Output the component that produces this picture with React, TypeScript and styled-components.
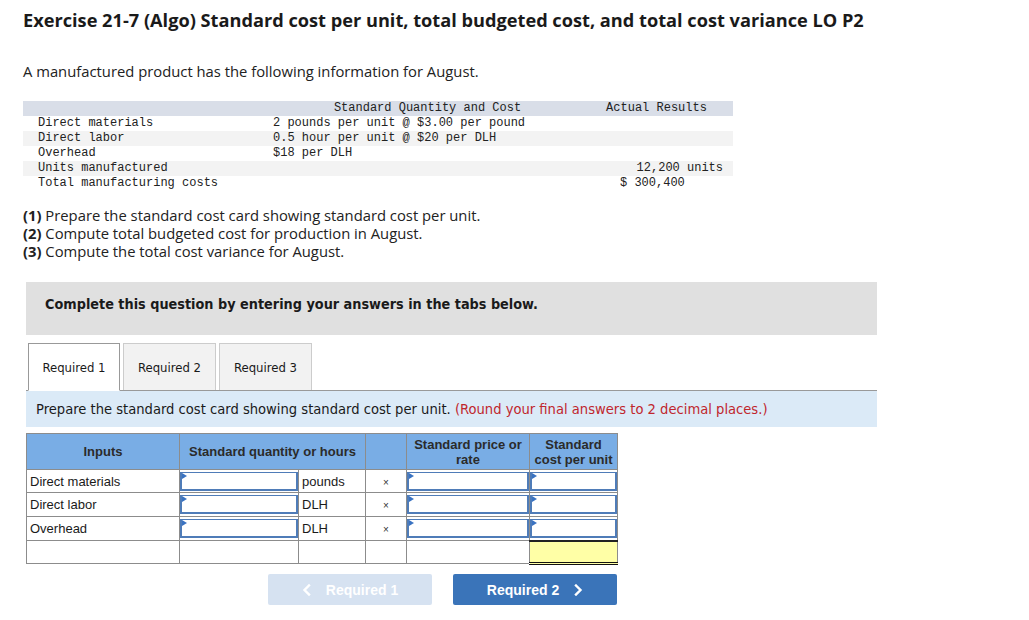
import React from "react";
import styled, { createGlobalStyle } from "styled-components";

const GlobalStyle = createGlobalStyle`
  html, body { margin: 0; padding: 0; background: #fff; }
  body { font-family: "Liberation Sans", Arial, sans-serif; color: #333; }
`;

const Page = styled.div`
  width: 1029px;
  padding-bottom: 10px;
`;

const Title = styled.h1`
  margin: 9px 0 0 23px;
  font-family: "Open Sans", Lato, sans-serif;
  font-weight: 700;
  font-size: 18.2px;
  line-height: 22px;
  color: #1a1a1a;
  white-space: nowrap;
`;

const Lead = styled.p`
  margin: 30px 0 0 23px;
  font-family: "Open Sans", Lato, sans-serif;
  font-size: 14.8px;
  line-height: 20px;
  color: #222;
`;

const DataTable = styled.table`
  margin: 20px 0 0 23px;
  border-collapse: collapse;
  font-family: "Liberation Mono", "DejaVu Sans Mono", monospace;
  font-size: 12px;
  color: #222;
  width: 710px;
  table-layout: fixed;
`;

const DataRow = styled.tr<{ $tone: "head" | "white" | "grey" }>`
  height: 15px;
  background: ${(p) =>
    p.$tone === "head" ? "#d9dee8" : p.$tone === "grey" ? "#f3f3f3" : "#fff"};
`;

const DataCell = styled.td<{ $align?: string; $padL?: number; $padR?: number }>`
  padding: 0 ${(p) => p.$padR ?? 0}px 0 ${(p) => p.$padL ?? 0}px;
  line-height: 15px;
  text-align: ${(p) => p.$align ?? "left"};
  white-space: pre;
  overflow: visible;
`;

const Questions = styled.div`
  margin: 15px 0 0 23px;
  font-family: "Open Sans", Lato, sans-serif;
  font-size: 14.8px;
  line-height: 18px;
  color: #222;
`;

const QLine = styled.div`
  b { font-weight: 700; }
`;

const Banner = styled.div`
  margin: 22px 0 0 26px;
  width: 851px;
  height: 53px;
  box-sizing: border-box;
  padding: 13px 0 0 19px;
  background: #e0e0e0;
  font-family: "DejaVu Sans Condensed", "DejaVu Sans", sans-serif;
  font-stretch: condensed;
  font-weight: 700;
  font-size: 14.3px;
  line-height: 18px;
  color: #1a1a1a;
`;

const TabBar = styled.div`
  margin: 8px 0 0 26px;
  width: 851px;
  display: flex;
  gap: 3px;
  padding-left: 2px;
  box-sizing: border-box;
  border-bottom: 1px solid #999;
  height: 48px;
`;

const Tab = styled.div<{ $active?: boolean }>`
  width: ${(p) => (p.$active ? 92 : 93)}px;
  box-sizing: border-box;
  display: flex;
  align-items: center;
  justify-content: center;
  border: 1px solid ${(p) => (p.$active ? "#999" : "#ccc")};
  border-bottom: ${(p) => (p.$active ? "1px solid #fff" : "none")};
  background: ${(p) => (p.$active ? "#fff" : "#f2f2f2")};
  margin-bottom: ${(p) => (p.$active ? "-1px" : "0")};
  height: ${(p) => (p.$active ? 48 : 47)}px;
  font-family: "DejaVu Sans Condensed", "DejaVu Sans", sans-serif;
  font-stretch: condensed;
  font-size: 13px;
  color: #1a1a1a;
`;

const Instruction = styled.div`
  margin: 0 0 0 26px;
  width: 851px;
  height: 36px;
  box-sizing: border-box;
  padding: 9px 0 0 10px;
  background: #dbeaf7;
  font-family: "DejaVu Sans Condensed", "DejaVu Sans", sans-serif;
  font-stretch: condensed;
  font-size: 14.6px;
  line-height: 18px;
  color: #1a1a1a;
  white-space: nowrap;
`;

const Red = styled.span`
  color: #c0262d;
`;

const AnswerTable = styled.table`
  margin: 6px 0 0 26px;
  border-collapse: collapse;
  table-layout: fixed;
  width: 591px;
  font-family: "Liberation Sans", Arial, sans-serif;
  font-size: 13px;
  color: #1a1a1a;
`;

const Th = styled.th`
  height: 36px;
  padding: 0 2px;
  background: #79ade5;
  border: 1px solid #8c8c8c;
  font-weight: 700;
  font-size: 13px;
  line-height: 15px;
  color: #2b2b2b;
  text-align: center;
  box-sizing: border-box;
`;

const Td = styled.td<{ $h: number; $center?: boolean }>`
  height: ${(p) => p.$h}px;
  padding: 0 3px;
  border: 1px solid #8c8c8c;
  text-align: ${(p) => (p.$center ? "center" : "left")};
  box-sizing: border-box;
`;

const InputTd = styled.td`
  padding: 0;
  border: 1px solid #8c8c8c;
  position: relative;
`;

const InputBox = styled.div`
  position: relative;
  height: 100%;
  min-height: 19px;
  box-sizing: border-box;
  border: 2px solid #4f7cb8;
  border-top-width: 1px;
  background: #fff;
`;

const Marker = styled.span`
  position: absolute;
  left: 0;
  top: 0;
  width: 0;
  height: 0;
  border-top: 3px solid transparent;
  border-bottom: 3px solid transparent;
  border-left: 5px solid #3a73c2;
`;

const TotalTd = styled.td`
  padding: 0;
  background: #ffffa6;
  border: 1px solid #8c8c8c;
  border-top: 2px solid #222;
  border-bottom: 3px double #111;
`;

const Times = styled.span`
  font-size: 10px;
  color: #333;
`;

const ButtonRow = styled.div`
  margin: 9px 0 0 26px;
  width: 591px;
  display: flex;
  justify-content: flex-end;
  gap: 21px;
`;

const NavButton = styled.button<{ $disabled?: boolean }>`
  width: 164px;
  height: 31px;
  border: none;
  border-radius: 2px;
  background: ${(p) => (p.$disabled ? "#d6e2f1" : "#3a74b9")};
  color: #fff;
  display: flex;
  align-items: center;
  justify-content: center;
  gap: 14px;
  font-family: "Liberation Sans", Arial, sans-serif;
  font-weight: 700;
  font-size: 14px;
  cursor: pointer;
  padding: 0;
`;

const Chevron = ({ dir }: { dir: "left" | "right" }) => (
  <svg width="10" height="12" viewBox="0 0 10 12" aria-hidden>
    <path
      d={dir === "left" ? "M7 1.5 L2.5 6 L7 10.5" : "M3 1.5 L7.5 6 L3 10.5"}
      fill="none"
      stroke="#fff"
      strokeWidth="2.4"
      strokeLinecap="square"
    />
  </svg>
);

const Input = () => (
  <InputTd>
    <InputBox>
      <Marker />
    </InputBox>
  </InputTd>
);

const rows = [
  { label: "Direct materials", unit: "pounds", h: 23 },
  { label: "Direct labor", unit: "DLH", h: 24 },
  { label: "Overhead", unit: "DLH", h: 24 },
];

export default function App() {
  return (
    <Page>
      <GlobalStyle />
      <Title>
        Exercise 21-7 (Algo) Standard cost per unit, total budgeted cost, and total cost variance LO P2
      </Title>
      <Lead>A manufactured product has the following information for August.</Lead>

      <DataTable>
        <colgroup>
          <col style={{ width: 242 }} />
          <col style={{ width: 325 }} />
          <col style={{ width: 143 }} />
        </colgroup>
        <tbody>
          <DataRow $tone="head">
            <DataCell />
            <DataCell $align="center">Standard Quantity and Cost</DataCell>
            <DataCell $align="center" $padR={10}>Actual Results</DataCell>
          </DataRow>
          <DataRow $tone="white">
            <DataCell $padL={15}>Direct materials</DataCell>
            <DataCell $padL={8}>2 pounds per unit @ $3.00 per pound</DataCell>
            <DataCell />
          </DataRow>
          <DataRow $tone="grey">
            <DataCell $padL={15}>Direct labor</DataCell>
            <DataCell $padL={8}>0.5 hour per unit @ $20 per DLH</DataCell>
            <DataCell />
          </DataRow>
          <DataRow $tone="white">
            <DataCell $padL={15}>Overhead</DataCell>
            <DataCell $padL={8}>$18 per DLH</DataCell>
            <DataCell />
          </DataRow>
          <DataRow $tone="grey">
            <DataCell $padL={15}>Units manufactured</DataCell>
            <DataCell />
            <DataCell $align="right" $padR={10}>12,200 units</DataCell>
          </DataRow>
          <DataRow $tone="white">
            <DataCell $padL={15}>Total manufacturing costs</DataCell>
            <DataCell />
            <DataCell $padL={30}>$ 300,400</DataCell>
          </DataRow>
        </tbody>
      </DataTable>

      <Questions>
        <QLine><b>(1)</b> Prepare the standard cost card showing standard cost per unit.</QLine>
        <QLine><b>(2)</b> Compute total budgeted cost for production in August.</QLine>
        <QLine><b>(3)</b> Compute the total cost variance for August.</QLine>
      </Questions>

      <Banner>Complete this question by entering your answers in the tabs below.</Banner>

      <TabBar>
        <Tab $active>Required 1</Tab>
        <Tab>Required 2</Tab>
        <Tab>Required 3</Tab>
      </TabBar>

      <Instruction>
        Prepare the standard cost card showing standard cost per unit.{" "}
        <Red>(Round your final answers to 2 decimal places.)</Red>
      </Instruction>

      <AnswerTable>
        <colgroup>
          <col style={{ width: 153 }} />
          <col style={{ width: 119 }} />
          <col style={{ width: 67 }} />
          <col style={{ width: 41 }} />
          <col style={{ width: 123 }} />
          <col style={{ width: 88 }} />
        </colgroup>
        <thead>
          <tr>
            <Th>Inputs</Th>
            <Th colSpan={2}>Standard quantity or hours</Th>
            <Th />
            <Th>
              Standard price or
              <br />
              rate
            </Th>
            <Th>
              Standard
              <br />
              cost per unit
            </Th>
          </tr>
        </thead>
        <tbody>
          {rows.map((r) => (
            <tr key={r.label}>
              <Td $h={r.h}>{r.label}</Td>
              <Input />
              <Td $h={r.h}>{r.unit}</Td>
              <Td $h={r.h} $center>
                <Times>×</Times>
              </Td>
              <Input />
              <Input />
            </tr>
          ))}
          <tr>
            <Td $h={23} />
            <Td $h={23} />
            <Td $h={23} />
            <Td $h={23} />
            <Td $h={23} />
            <TotalTd />
          </tr>
        </tbody>
      </AnswerTable>

      <ButtonRow>
        <NavButton $disabled>
          <Chevron dir="left" />
          Required 1
        </NavButton>
        <NavButton>
          Required 2
          <Chevron dir="right" />
        </NavButton>
      </ButtonRow>
    </Page>
  );
}
